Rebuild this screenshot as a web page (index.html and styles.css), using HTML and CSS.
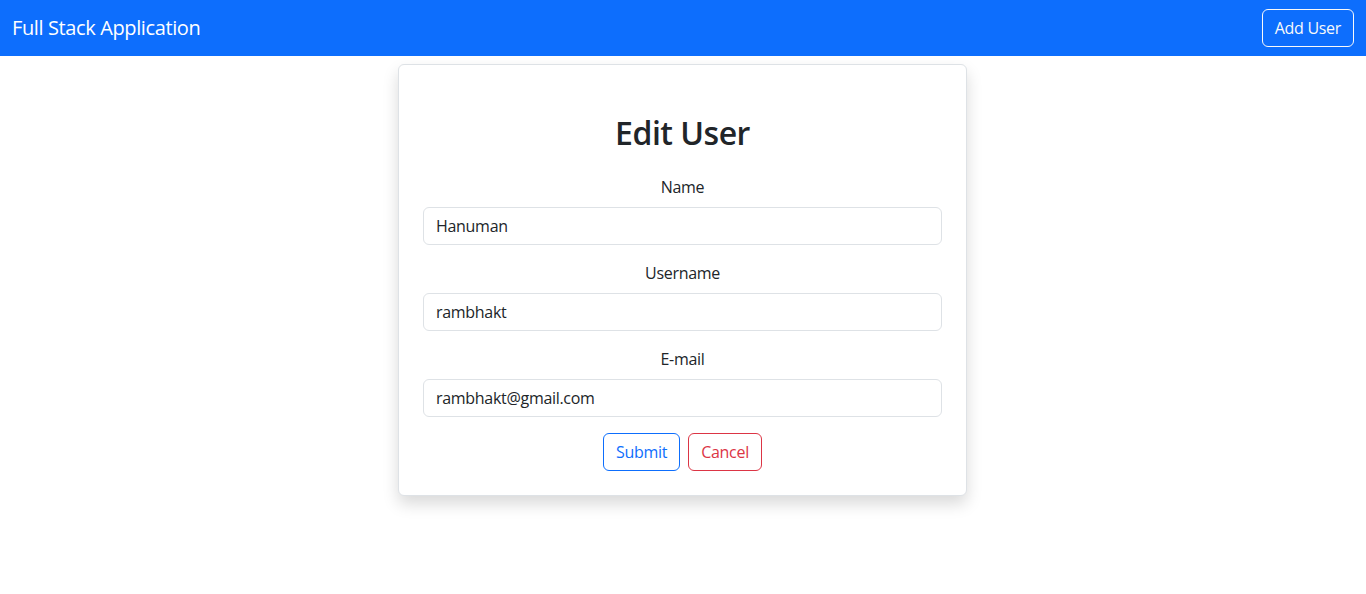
FILE: index.html
```html
<!DOCTYPE html>
<html lang="en">
<head>
<meta charset="utf-8">
<title>Full Stack Application</title>
<link rel="stylesheet" href="styles.css">
</head>
<body>
<nav class="navbar">
  <a class="brand" href="#">Full Stack Application</a>
  <a class="btn btn-light-outline" href="#">Add User</a>
</nav>
<main class="container">
  <div class="card">
    <h2 class="title">Edit User</h2>
    <form class="form">
      <div class="field">
        <label class="label" for="name">Name</label>
        <input class="input" id="name" type="text" value="Hanuman">
      </div>
      <div class="field">
        <label class="label" for="username">Username</label>
        <input class="input" id="username" type="text" value="rambhakt">
      </div>
      <div class="field">
        <label class="label" for="email">E-mail</label>
        <input class="input" id="email" type="text" value="rambhakt@gmail.com">
      </div>
      <div class="actions">
        <button class="btn btn-primary-outline" type="button">Submit</button>
        <a class="btn btn-danger-outline" href="#">Cancel</a>
      </div>
    </form>
  </div>
</main>
</body>
</html>
```
FILE: styles.css
```css
* { box-sizing: border-box; }
html, body {
  margin: 0;
  padding: 0;
  background: #fff;
  color: #212529;
  font-family: "Open Sans", "Noto Sans", sans-serif;
  font-size: 16px;
  line-height: 1.5;
  letter-spacing: -0.3px;
}
.navbar {
  background: #0d6efd;
  height: 56px;
  padding: 8px 12px;
  display: flex;
  align-items: center;
  justify-content: space-between;
}
.brand {
  color: #fff;
  text-decoration: none;
  font-size: 20px;
  line-height: 30px;
  padding: 5px 0;
  letter-spacing: -0.38px;
}
.btn {
  display: inline-block;
  font-family: inherit;
  font-size: 16px;
  line-height: 24px;
  letter-spacing: -0.3px;
  padding: 6px 12px;
  border: 1px solid transparent;
  border-radius: 6px;
  background: transparent;
  text-decoration: none;
  cursor: pointer;
}
.btn-light-outline { color: #f8f9fa; border-color: #f8f9fa; }
.btn-primary-outline { color: #0d6efd; border-color: #0d6efd; }
.btn-danger-outline { color: #dc3545; border-color: #dc3545; margin: 0 8px; }
.container {
  display: flex;
  justify-content: center;
  padding-top: 8px;
  padding-bottom: 40px;
}
.card {
  width: 569px;
  margin-left: -1px;
  border: 1px solid #dee2e6;
  border-radius: 6px;
  padding: 24px;
  background: #fff;
  box-shadow: 0 8px 16px rgba(0,0,0,0.15);
  text-align: center;
}
.title {
  margin: 25px 24px 23px;
  font-size: 32px;
  font-weight: 600;
  line-height: 1.2;
  letter-spacing: -0.5px;
}
.field { margin-bottom: 16px; }
.label {
  display: inline-block;
  margin-bottom: 8px;
}
.input {
  display: block;
  width: 100%;
  padding: 6px 12px;
  font-family: inherit;
  font-size: 16px;
  line-height: 24px;
  letter-spacing: -0.3px;
  color: #212529;
  border: 1px solid #dee2e6;
  border-radius: 6px;
  background: #fff;
  text-align: left;
}
.actions {
  display: flex;
  justify-content: center;
}
.actions .btn-primary-outline { margin-left: 8px; }
```
